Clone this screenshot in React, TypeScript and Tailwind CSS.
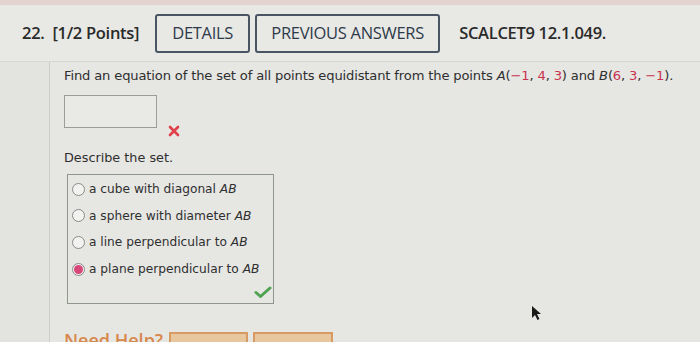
import React from "react";

const Radio = ({ checked }: { checked?: boolean }) => (
  <span className="relative inline-flex w-[13px] h-[13px] rounded-full border border-[#8a8a8a] bg-[#f2f2f0] items-center justify-center shrink-0">
    {checked && <span className="w-[9px] h-[9px] rounded-full bg-[#d8477a]" />}
  </span>
);

export default function App() {
  const opts: [string, boolean][] = [
    ["a cube with diagonal ", false],
    ["a sphere with diameter ", false],
    ["a line perpendicular to ", false],
    ["a plane perpendicular to ", true],
  ];
  return (
    <div className="relative w-[700px] h-[342px] overflow-hidden bg-[#e5e5e2] text-[#2f2f2f]" style={{ fontFamily: '"DejaVu Sans", sans-serif' }}>
      <div className="h-[5px] bg-[#e2d2d0]" />
      <div className="h-[57px] flex items-center pl-[22px] bg-[#e8e8e5] border-b border-[#d6d6d2]" style={{ fontFamily: '"Open Sans", sans-serif' }}>
        <span className="text-[16.5px] font-semibold text-[#2a2a2a] tracking-[-0.3px]">22.&nbsp; [1/2 Points]</span>
        <span className="ml-[16px] h-[39px] w-[95px] flex items-center justify-center border-2 border-[#4a5564] rounded-[3px] text-[16.5px] text-[#2e3a4a] tracking-[-0.3px]">DETAILS</span>
        <span className="ml-[5px] h-[39px] w-[185px] flex items-center justify-center border-2 border-[#4a5564] rounded-[3px] text-[16.5px] text-[#2e3a4a] tracking-[-0.3px]">PREVIOUS ANSWERS</span>
        <span className="ml-[19px] text-[16.5px] font-semibold text-[#2a2a2a] tracking-[-0.3px]">SCALCET9 12.1.049.</span>
      </div>
      <div className="flex h-[280px]">
        <div className="w-[50px] shrink-0 border-r border-[#cdcdc9] bg-[#e3e3e0]" />
        <div className="flex-1 pl-[14px] pt-[6px] bg-[#e6e6e3]">
          <div className="text-[13.1px] leading-[16px] tracking-[-0.15px] whitespace-nowrap">
            Find an equation of the set of all points equidistant from the points <i>A</i>(<span className="text-[#c8334e]">−1</span>, <span className="text-[#c8334e]">4</span>, <span className="text-[#c8334e]">3</span>) and <i>B</i>(<span className="text-[#c8334e]">6</span>, <span className="text-[#c8334e]">3</span>, <span className="text-[#c8334e]">−1</span>).
          </div>
          <div className="flex items-end mt-[11px]">
            <div className="w-[93px] h-[33px] border border-[#9c9c9a] bg-[#e9e9e6]" />
            <svg className="ml-[11px] mb-[-9px]" width="12" height="12" viewBox="0 0 12 12">
              <path d="M2 2 L10 10 M10 2 L2 10" stroke="#e0404a" strokeWidth="2.6" strokeLinecap="round" />
            </svg>
          </div>
          <div className="mt-[22px] text-[12.8px] leading-[16px]">Describe the set.</div>
          <div className="mt-[8px] ml-[3px] w-[207px] h-[130px] border border-[#8e968e] pt-[1px] pl-[4px] relative">
            {opts.map(([t, c], i) => (
              <div key={i} className="flex items-center h-[26.6px] gap-[4px] text-[12.2px] whitespace-nowrap">
                <Radio checked={c} />
                <span>{t}<i>AB</i></span>
              </div>
            ))}
            <svg className="absolute right-[1px] bottom-[5px]" width="18" height="12" viewBox="0 0 18 12">
              <path d="M2 6.5 L6.5 10.5 L16 2" fill="none" stroke="#4fa24f" strokeWidth="3" strokeLinecap="round" strokeLinejoin="round" />
            </svg>
          </div>
          <div className="mt-[26px] flex items-start">
            <span className="text-[18px] leading-[20px] font-semibold text-[#d9884c]" style={{ fontFamily: '"Open Sans", sans-serif' }}>Need Help?</span>
            <span className="ml-[6px] mt-[2px] w-[79px] h-[20px] border-2 border-[#d79a62] bg-[#e8c79e]" />
            <span className="ml-[5px] mt-[2px] w-[80px] h-[20px] border-2 border-[#d79a62] bg-[#e8c79e]" />
          </div>
        </div>
      </div>
      <svg className="absolute left-[531px] top-[305px]" width="12" height="16" viewBox="0 0 12 16">
        <path d="M1 1 L1 13 L4 10 L6.5 15 L8.5 14 L6 9 L10 9 Z" fill="#1a1a1a" />
      </svg>
    </div>
  );
}
